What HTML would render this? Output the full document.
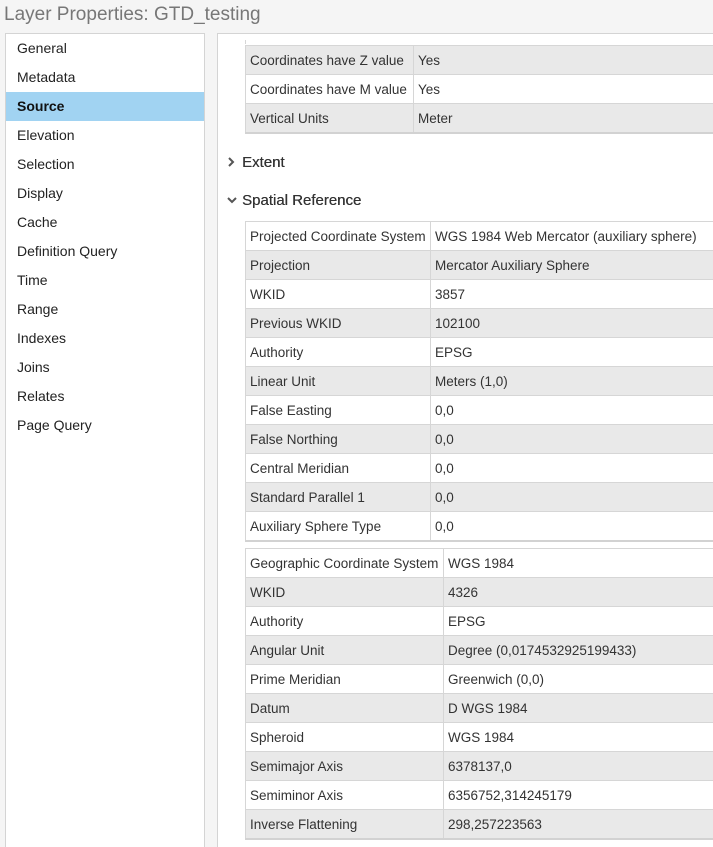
<!DOCTYPE html><html><head><style>
html,body{margin:0;width:713px;height:847px;overflow:hidden}
body{background:#f5f5f5;font-family:"Liberation Sans",sans-serif;position:relative;color:#333}
.title{position:absolute;left:4px;top:4px;font-size:19px;color:#777}
.left{position:absolute;left:5px;top:33px;width:198px;height:830px;background:#fff;border:1px solid #d4d4d4}
.left div{height:29px;line-height:28px;padding-left:11px;font-size:14px;color:#222}
.left .sel{background:#a1d3f2;font-weight:bold;color:#111}
.right{position:absolute;left:217px;top:33px;width:520px;height:830px;background:#fff;border:1px solid #d4d4d4}
table{position:absolute;border-collapse:collapse;font-size:13.5px;color:#333;border-bottom:2px solid #d2d2d2}
td{height:28px;border:1px solid #d6d6d6;padding:0 0 0 4px;white-space:nowrap}
tr:nth-child(even) td{background:#e9e9e9}
.alt tr:nth-child(odd) td{background:#e9e9e9}
.alt tr:nth-child(even) td{background:#fff}
.hdr{position:absolute;left:242px;font-size:15px;color:#333;font-weight:bold;-webkit-text-stroke:0}
svg{position:absolute}
</style></head><body>
<div class="title">Layer Properties: GTD_testing</div>
<div class="left">
<div>General</div><div>Metadata</div><div class="sel">Source</div><div>Elevation</div><div>Selection</div><div>Display</div><div>Cache</div><div>Definition Query</div><div>Time</div><div>Range</div><div>Indexes</div><div>Joins</div><div>Relates</div><div>Page Query</div></div>
<div class="right"></div>
<table class="alt" style="left:245px;top:45px;width:480px"><tr><td style="width:163px">Coordinates have Z value</td><td>Yes</td></tr><tr><td>Coordinates have M value</td><td>Yes</td></tr><tr><td>Vertical Units</td><td>Meter</td></tr></table>
<div style="position:absolute;left:245px;top:40px;width:470px;height:4px;border-left:1px solid #d6d6d6"></div>
<svg style="left:226px;top:156px" width="10" height="12"><path d="M3 2 L7 6 L3 10" stroke="#555" stroke-width="2" fill="none"/></svg>
<div class="hdr" style="top:154px;font-weight:normal;text-shadow:0.3px 0 0 #333">Extent</div>
<svg style="left:226px;top:195px" width="12" height="10"><path d="M2 3 L6 7 L10 3" stroke="#555" stroke-width="2" fill="none"/></svg>
<div class="hdr" style="top:192px;font-weight:normal;text-shadow:0.3px 0 0 #333">Spatial Reference</div>
<table style="left:245px;top:221px;width:480px"><tr><td style="width:180px">Projected Coordinate System</td><td>WGS 1984 Web Mercator (auxiliary sphere)</td></tr><tr><td>Projection</td><td>Mercator Auxiliary Sphere</td></tr><tr><td>WKID</td><td>3857</td></tr><tr><td>Previous WKID</td><td>102100</td></tr><tr><td>Authority</td><td>EPSG</td></tr><tr><td>Linear Unit</td><td>Meters (1,0)</td></tr><tr><td>False Easting</td><td>0,0</td></tr><tr><td>False Northing</td><td>0,0</td></tr><tr><td>Central Meridian</td><td>0,0</td></tr><tr><td>Standard Parallel 1</td><td>0,0</td></tr><tr><td>Auxiliary Sphere Type</td><td>0,0</td></tr></table>
<table style="left:245px;top:548px;width:480px"><tr><td style="width:193px">Geographic Coordinate System</td><td>WGS 1984</td></tr><tr><td>WKID</td><td>4326</td></tr><tr><td>Authority</td><td>EPSG</td></tr><tr><td>Angular Unit</td><td>Degree (0,0174532925199433)</td></tr><tr><td>Prime Meridian</td><td>Greenwich (0,0)</td></tr><tr><td>Datum</td><td>D WGS 1984</td></tr><tr><td>Spheroid</td><td>WGS 1984</td></tr><tr><td>Semimajor Axis</td><td>6378137,0</td></tr><tr><td>Semiminor Axis</td><td>6356752,314245179</td></tr><tr><td>Inverse Flattening</td><td>298,257223563</td></tr></table>
</body></html>
